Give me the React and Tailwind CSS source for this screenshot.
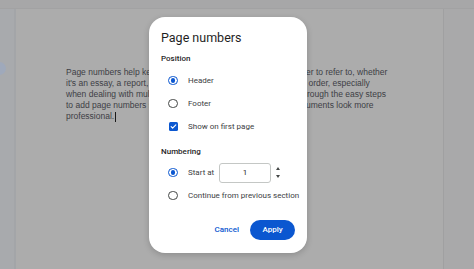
import React from "react";

function Radio({ checked }) {
  return (
    <span
      className={`flex items-center justify-center w-[9.5px] h-[9.5px] rounded-full border-[1.5px] ${
        checked ? "border-[#0b57d0]" : "border-[#444746]"
      }`}
    >
      {checked && <span className="block w-[4.5px] h-[4.5px] rounded-full bg-[#0b57d0]" />}
    </span>
  );
}

function Checkbox() {
  return (
    <span className="flex items-center justify-center w-[9px] h-[9px] rounded-[1.5px] bg-[#0b57d0]">
      <svg width="7" height="7" viewBox="0 0 24 24" fill="none" stroke="white" strokeWidth="4" strokeLinecap="round" strokeLinejoin="round">
        <path d="M4 12.5l5 5L20 6.5" />
      </svg>
    </span>
  );
}

function Row({ control, children }) {
  return (
    <div className="flex items-center h-[23px] whitespace-nowrap">
      <div className="w-[27px] shrink-0 pl-[7px] flex items-center">{control}</div>
      {children}
    </div>
  );
}

const lines = [
  "Page numbers help keep documents neat and easy for the reader to refer to, whether",
  "it's an essay, a report, or a book, they help to keep everything in order, especially",
  "when dealing with multiple pages. In this short guide, we walk through the easy steps",
  "to add page numbers so that all of your online Google Docs documents look more",
];

export default function App() {
  return (
    <div className="relative w-[474px] h-[269px] overflow-hidden bg-[#a7a7a8]">
      {/* dimmed editor behind */}
      <div className="flex flex-col h-full">
        <div className="h-[9px] border-b border-[#a2a2a3]" />
        <div className="flex flex-1">
          <div className="relative w-[16px] bg-[#a8aaad] border-r-[2px] border-[#a3a5a8]">
            <span className="absolute -left-[7px] top-[53px] w-[13px] h-[13px] rounded-full bg-[#9fa9bb]" />
          </div>
          <div className="w-[428px] bg-[#acacac] border-r border-[#a0a0a1] pl-[50px] pt-[58px] font-['Liberation_Sans',Arial,sans-serif] text-[8.5px] leading-[11.1px] text-[#3d3e45]">
            {lines.map((l) => (
              <div key={l} className="whitespace-nowrap">
                {l}
              </div>
            ))}
            <div className="flex items-center whitespace-nowrap">
              professional.
              <span className="inline-block w-[1px] h-[10px] bg-[#1a1a1a] ml-[1px]" />
            </div>
          </div>
          <div className="flex-1 bg-[#a9a9aa]" />
        </div>
      </div>

      {/* dialog */}
      <div className="absolute left-[149px] top-[17px] w-[158px] h-[236px] rounded-[16px] bg-white shadow-[0_2px_6px_rgba(0,0,0,0.18)] px-3 pt-[13px] pb-[13px] flex flex-col font-['Roboto',sans-serif] text-[#1f1f1f]">
        <div className="h-[16px] leading-[16px] text-[12.5px]">Page numbers</div>
        <div className="mt-[7px] h-[12px] leading-[12px] text-[8px] font-medium">Position</div>
        <div className="mt-[4px] text-[8px] text-[#3c4043]">
          <Row control={<Radio checked />}>Header</Row>
          <Row control={<Radio />}>Footer</Row>
          <Row control={<span className="pl-[0.5px]"><Checkbox /></span>}>Show on first page</Row>
        </div>
        <div className="mt-[8px] h-[12px] leading-[12px] text-[8px] font-medium">Numbering</div>
        <div className="mt-[3px] text-[8px] text-[#3c4043]">
          <Row control={<Radio checked />}>
            <span className="w-[31px]">Start at</span>
            <div className="w-[52px] h-[20px] rounded-[3px] border border-[#c4c7c5] flex items-center justify-center text-[#1f1f1f]">
              1
            </div>
            <div className="ml-[5px] flex flex-col gap-[5px]">
              <svg width="4" height="3" viewBox="0 0 4 3">
                <path d="M2 0L4 3H0z" fill="#444746" />
              </svg>
              <svg width="4" height="3" viewBox="0 0 4 3">
                <path d="M0 0H4L2 3z" fill="#444746" />
              </svg>
            </div>
          </Row>
          <Row control={<Radio />}>Continue from previous section</Row>
        </div>
        <div className="mt-[13px] flex justify-end items-center gap-[11px] text-[8px] font-medium">
          <span className="text-[#0b57d0]">Cancel</span>
          <span className="w-[45px] h-[20px] rounded-full bg-[#0b57d0] text-white flex items-center justify-center">
            Apply
          </span>
        </div>
      </div>
    </div>
  );
}
